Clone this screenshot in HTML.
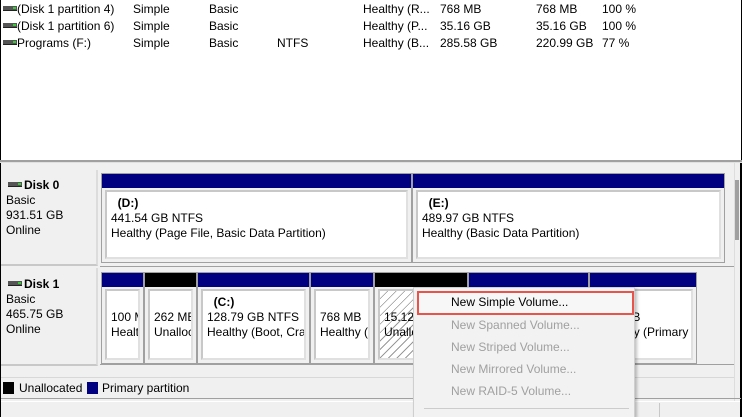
<!DOCTYPE html>
<html><head><meta charset="utf-8"><style>
*{margin:0;padding:0;box-sizing:border-box}
html,body{width:742px;height:417px;overflow:hidden}
body{background:#f0f0f0;font-family:"Liberation Sans",sans-serif;font-size:12px;color:#000;position:relative}
.a{position:absolute;white-space:nowrap}
.top{position:absolute;left:0;top:0;width:742px;height:160px;background:#fff;border-left:1px solid #000;border-right:1px solid #000}
.ico{position:absolute;width:14px;height:5px;background:#555;border-bottom:1px solid #222}
.ico:after{content:"";position:absolute;right:1px;top:1px;width:3px;height:2px;background:#3c3}
.lbl{position:absolute;left:1px;width:97px;background:#f0f0f0;border-right:2px solid #dcdcdc;border-bottom:2px solid #c8c8c8}
.p{position:absolute;border:1px solid #a0a0a0;background:#f0f0f0;overflow:hidden}
.bar{position:absolute;left:0;right:0;top:0;height:14px;background:#000080}
.bk{background:#000}
.box{position:absolute;left:3px;right:3px;top:16px;bottom:3px;background:#fff;border:2px solid #c8c8c8;border-right-color:#e0e0e0;border-bottom-color:#e0e0e0;overflow:hidden;padding:4px 0 0 4px;line-height:15px;white-space:nowrap}
.hatch{background:repeating-linear-gradient(135deg,#fff 0 5px,#999 5px 6px)}
.menu{position:absolute;left:413px;top:287px;width:222px;height:130px;background:#f2f2f2;border:1px solid #cfcfcf;border-bottom:none;box-shadow:2px 2px 3px rgba(0,0,0,.25)}
.mi{position:absolute;left:37px;color:#a0a0a0;white-space:nowrap}
</style></head><body>
<div class="top">
<div class="ico" style="left:2px;top:6px"></div><div class="ico" style="left:2px;top:23px"></div><div class="ico" style="left:2px;top:40px"></div>
<div class="a" style="left:16px;top:2px">(Disk 1 partition 4)</div><div class="a" style="left:132px;top:2px">Simple</div><div class="a" style="left:208px;top:2px">Basic</div><div class="a" style="left:362px;top:2px">Healthy (R...</div><div class="a" style="left:439px;top:2px">768 MB</div><div class="a" style="left:535px;top:2px">768 MB</div><div class="a" style="left:601px;top:2px">100 %</div>
<div class="a" style="left:16px;top:19px">(Disk 1 partition 6)</div><div class="a" style="left:132px;top:19px">Simple</div><div class="a" style="left:208px;top:19px">Basic</div><div class="a" style="left:362px;top:19px">Healthy (P...</div><div class="a" style="left:439px;top:19px">35.16 GB</div><div class="a" style="left:535px;top:19px">35.16 GB</div><div class="a" style="left:601px;top:19px">100 %</div>
<div class="a" style="left:16px;top:36px">Programs (F:)</div><div class="a" style="left:132px;top:36px">Simple</div><div class="a" style="left:208px;top:36px">Basic</div><div class="a" style="left:276px;top:36px">NTFS</div><div class="a" style="left:362px;top:36px">Healthy (B...</div><div class="a" style="left:439px;top:36px">285.58 GB</div><div class="a" style="left:535px;top:36px">220.99 GB</div><div class="a" style="left:601px;top:36px">77 %</div>
</div>
<div class="a" style="left:0;top:160px;width:742px;height:3px;background:#a0a0a0;border-bottom:1px solid #e0e0e0"></div>
<div class="a" style="left:0;top:163px;width:1px;height:254px;background:#000"></div>
<div class="a" style="left:740px;top:163px;width:2px;height:254px;background:#000"></div>
<div class="a" style="left:734px;top:163px;width:6px;height:238px;background:#f0f0f0;border-left:1px solid #ddd"></div>
<div class="a" style="left:735px;top:180px;width:4px;height:60px;background:#a0a0a0"></div>

<div class="lbl" style="top:170px;height:96px"></div>
<div class="ico" style="left:8px;top:182px"></div>
<div class="a" style="left:24px;top:178px;font-weight:bold">Disk 0</div>
<div class="a" style="left:6px;top:193px;line-height:15px">Basic<br>931.51 GB<br>Online</div>
<div class="lbl" style="top:268px;height:98px"></div>
<div class="ico" style="left:8px;top:281px"></div>
<div class="a" style="left:24px;top:277px;font-weight:bold">Disk 1</div>
<div class="a" style="left:6px;top:292px;line-height:15px">Basic<br>465.75 GB<br>Online</div>

<div class="a" style="left:100px;top:266px;width:634px;height:1px;background:#a0a0a0"></div>
<div class="a" style="left:100px;top:364px;width:634px;height:1px;background:#a0a0a0"></div>

<div class="p" style="left:101px;top:173px;width:311px;height:90px"><div class="bar"></div><div class="box"><b>&nbsp;&nbsp;(D:)</b><br>441.54 GB NTFS<br>Healthy (Page File, Basic Data Partition)</div></div>
<div class="p" style="left:412px;top:173px;width:313px;height:90px"><div class="bar"></div><div class="box"><b>&nbsp;&nbsp;(E:)</b><br>489.97 GB NTFS<br>Healthy (Basic Data Partition)</div></div>

<div class="p" style="left:101px;top:272px;width:43px;height:92px"><div class="bar"></div><div class="box" style="padding-top:19px">100 MB<br>Healthy</div></div>
<div class="p" style="left:144px;top:272px;width:53px;height:92px"><div class="bar bk"></div><div class="box" style="padding-top:19px">262 MB<br>Unallocated</div></div>
<div class="p" style="left:197px;top:272px;width:113px;height:92px"><div class="bar"></div><div class="box"><b>&nbsp;&nbsp;(C:)</b><br>128.79 GB NTFS<br>Healthy (Boot, Crash</div></div>
<div class="p" style="left:310px;top:272px;width:64px;height:92px"><div class="bar"></div><div class="box" style="padding-top:19px">768 MB<br>Healthy (</div></div>
<div class="p" style="left:374px;top:272px;width:94px;height:92px"><div class="bar bk"></div><div class="box hatch" style="padding-top:19px">15.12 GB<br>Unallocated</div></div>
<div class="p" style="left:468px;top:272px;width:121px;height:92px"><div class="bar"></div><div class="box"></div></div>
<div class="p" style="left:589px;top:272px;width:108px;height:92px"><div class="bar"></div><div class="box" style="padding-top:19px;padding-left:4px">768 MB<br>Healthy (Primary</div></div>

<div class="a" style="left:1px;top:377px;width:733px;height:1px;background:#d8d8d8"></div>
<div class="a" style="left:3px;top:382px;width:11px;height:12px;background:#000"></div>
<div class="a" style="left:19px;top:381px">Unallocated</div>
<div class="a" style="left:87px;top:382px;width:11px;height:12px;background:#000080"></div>
<div class="a" style="left:102px;top:381px">Primary partition</div>
<div class="a" style="left:1px;top:398px;width:740px;height:1px;background:#a0a0a0"></div>
<div class="a" style="left:1px;top:401px;width:739px;height:16px;background:#f0f0f0;border-top:1px solid #fff"></div>
<div class="a" style="left:659px;top:403px;width:1px;height:14px;background:#c8c8c8"></div>

<div class="menu">
<div class="a" style="left:3px;top:3px;width:217px;height:24px;border:2px solid #e8534b;background:#f7f7f7"></div>
<div class="mi" style="top:7px;color:#000">New Simple Volume...</div>
<div class="mi" style="top:30px">New Spanned Volume...</div>
<div class="mi" style="top:52px">New Striped Volume...</div>
<div class="mi" style="top:74px">New Mirrored Volume...</div>
<div class="mi" style="top:96px">New RAID-5 Volume...</div>
<div class="a" style="left:10px;top:120px;width:205px;height:1px;background:#ccc"></div>
</div>
</body></html>
